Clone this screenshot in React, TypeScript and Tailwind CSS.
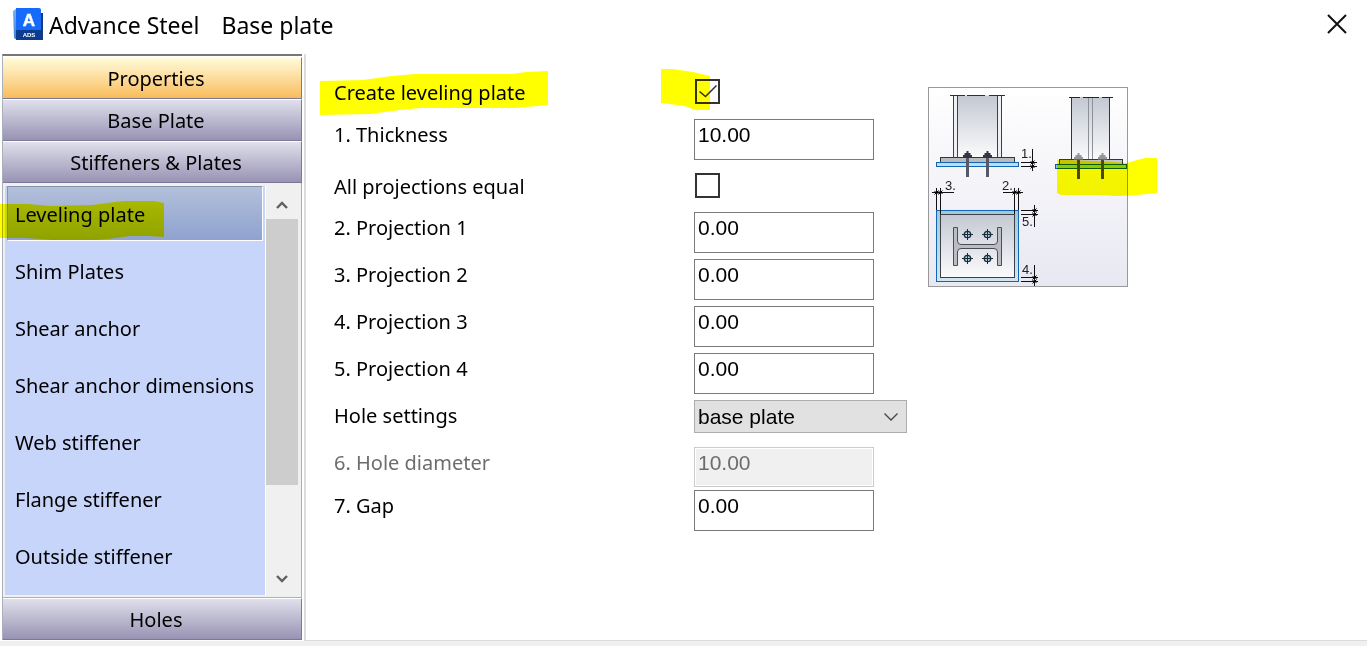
import React, { useState } from "react";

type Field = {
  id: string;
  label: string;
  kind: "check" | "text" | "select";
  value?: string;
  rowClass: string;
  disabled?: boolean;
  marked?: boolean;
};

const fields: Field[] = [
  { id: "create", label: "Create leveling plate", kind: "check", value: "on", rowClass: "h-10", marked: true },
  { id: "thickness", label: "1. Thickness", kind: "text", value: "10.00", rowClass: "h-[54px]" },
  { id: "equal", label: "All projections equal", kind: "check", rowClass: "h-[39px]" },
  { id: "proj1", label: "2. Projection 1", kind: "text", value: "0.00", rowClass: "h-[47px]" },
  { id: "proj2", label: "3. Projection 2", kind: "text", value: "0.00", rowClass: "h-[47px]" },
  { id: "proj3", label: "4. Projection 3", kind: "text", value: "0.00", rowClass: "h-[47px]" },
  { id: "proj4", label: "5. Projection 4", kind: "text", value: "0.00", rowClass: "h-[47px]" },
  { id: "holes", label: "Hole settings", kind: "select", value: "base plate", rowClass: "h-[47px]" },
  { id: "diameter", label: "6. Hole diameter", kind: "text", value: "10.00", rowClass: "h-[43px]", disabled: true },
  { id: "gap", label: "7. Gap", kind: "text", value: "0.00", rowClass: "h-[47px]" },
];

const pages = [
  "Leveling plate",
  "Shim Plates",
  "Shear anchor",
  "Shear anchor dimensions",
  "Web stiffener",
  "Flange stiffener",
  "Outside stiffener",
];

const Logo = () => (
  <svg width="30" height="32" viewBox="0 0 30 32" aria-hidden="true">
    <defs>
      <linearGradient id="logoSide" x1="0" y1="0" x2="0" y2="1">
        <stop offset="0" stopColor="#79b0f5" />
        <stop offset="1" stopColor="#3f7fd8" />
      </linearGradient>
    </defs>
    <path d="M0 3 L4 0 V32 L1 30 Z" fill="url(#logoSide)" />
    <path d="M27 5 H30 V32 H27 Z" fill="#123a86" />
    <path d="M3 0 H26 Q28 0 28 2 V22 H3 Z" fill="#176bfb" />
    <path d="M3 22 H29 V32 H3 Z" fill="#0d3c8f" />
    <text x="16" y="17.5" textAnchor="middle" fontSize="17" fontWeight="700" fill="#fff" stroke="#fff" strokeWidth="0.5" fontFamily="Liberation Sans, sans-serif">A</text>
    <text x="16" y="29" textAnchor="middle" fontSize="6" fontWeight="700" fill="#fff" fontFamily="Liberation Sans, sans-serif">ADS</text>
  </svg>
);

const SectionButton = ({ label, active }: { label: string; active?: boolean }) => (
  <button
    type="button"
    className={
      "flex h-[42px] w-full shrink-0 items-center justify-center border-b border-r border-t border-b-[#7d7896] border-r-[#7d7896] border-t-white bg-linear-to-b pl-2 pt-[2px] text-xl " +
      (active ? "from-[#fffbd9] to-[#f8bc59]" : "from-[#e0e0ec] to-[#9893b3]")
    }
  >
    {label}
  </button>
);

// Anchor bolt seen from the side, origin at the top of the rod
const Bolt = ({ x, y, head, rod }: { x: number; y: number; head: string; rod: string }) => (
  <g transform={`translate(${x} ${y})`}>
    <rect x="-1.5" y="7" width="3" height="19" fill={rod} />
    <path d="M-1 0 H1 V2 H3 V4 H4.5 V6.5 H-4.5 V4 H-3 V2 H-1 Z" fill={head} />
  </g>
);

const HoleMark = ({ x, y }: { x: number; y: number }) => (
  <g transform={`translate(${x} ${y})`} fill="none" stroke="#1d2a38">
    <circle r="3.2" fill="#a9cfe0" strokeWidth="1.3" />
    <path d="M-5.5 0 H5.5 M0 -5.5 V5.5" strokeWidth="1" />
  </g>
);

const Slash = ({ x, y }: { x: number; y: number }) => (
  <path d={`M${x - 2} ${y + 2} L${x + 2} ${y - 2} M${x - 2} ${y - 1} L${x + 2} ${y + 1}`} stroke="#000" />
);

const Diagram = () => (
  <svg width="200" height="200" viewBox="0 0 200 200" role="img" aria-label="Leveling plate diagram" className="block">
    <defs>
      <linearGradient id="sheet" x1="0" y1="0" x2="0" y2="1">
        <stop offset="0" stopColor="#ffffff" />
        <stop offset="1" stopColor="#e8e8f2" />
      </linearGradient>
      <linearGradient id="steel" x1="0" y1="0" x2="0" y2="1">
        <stop offset="0" stopColor="#c3c8d2" />
        <stop offset="1" stopColor="#fbfbfc" />
      </linearGradient>
      <linearGradient id="level" x1="0" y1="0" x2="0" y2="1">
        <stop offset="0" stopColor="#9bcbdc" />
        <stop offset="1" stopColor="#d3e6f0" />
      </linearGradient>
    </defs>
    <rect x="0.5" y="0.5" width="199" height="199" fill="url(#sheet)" stroke="#999" />

    {/* front view */}
    <rect x="25.5" y="8.5" width="48" height="62" fill="url(#steel)" />
    <path d="M26 9 H29 V70 H26 Z M70 9 H73 V70 H70 Z" fill="#eef0f3" />
    <path d="M25.5 8 V70 M29.5 8 V70 M69.5 8 V70 M73.5 8 V70" stroke="#3c4049" />
    <path d="M22 8.5 H37 M39 8.5 H57 M61 8.5 H77" stroke="#2c3038" />
    <rect x="12.5" y="70.5" width="74" height="5" fill="#b9bbc1" stroke="#33363d" />
    <rect x="8.5" y="75.5" width="82" height="4" fill="#b9e0f2" stroke="#1464b4" />
    <Bolt x={39.5} y={64} head="#33363f" rod="#555a66" />
    <Bolt x={59.5} y={64} head="#33363f" rod="#555a66" />

    {/* side view */}
    <rect x="143.5" y="10.5" width="38" height="62" fill="url(#steel)" stroke="#33363f" />
    <path d="M160.5 11 V72 M164.5 11 V72" stroke="#8d9096" />
    <path d="M141 10.5 H185" stroke="#22252c" />
    <path d="M152 10.5 H155 M171 10.5 H174" stroke="#c3c8d2" />
    <rect x="131.5" y="72.5" width="63" height="5" fill="#c4c4cc" stroke="#33363d" />
    <rect x="127.5" y="77.5" width="71" height="4" fill="#8ccbe0" stroke="#0f5c96" />
    <Bolt x={150.5} y={66} head="#94969b" rod="#4a4a48" />
    <Bolt x={174.5} y={66} head="#94969b" rod="#4a4a48" />

    {/* top view */}
    <rect x="8.5" y="123.5" width="82" height="71" fill="url(#level)" stroke="#1464b4" />
    <rect x="12.5" y="127.5" width="74" height="63" fill="url(#steel)" stroke="#3c4049" />
    <path
      d="M25.5 140.5 H29.5 V154 Q29.5 157.5 33 157.5 H66 Q69.5 157.5 69.5 154 V140.5 H73.5 V178.5 H69.5 V165 Q69.5 161.5 66 161.5 H33 Q29.5 161.5 29.5 165 V178.5 H25.5 Z"
      fill="#bcbdc3"
      stroke="#4a4d55"
    />
    <HoleMark x={39.5} y={147.5} />
    <HoleMark x={59.5} y={147.5} />
    <HoleMark x={39.5} y={171.5} />
    <HoleMark x={59.5} y={171.5} />

    {/* dimensions */}
    <path
      d="M93 75.5 H109 M93 79.5 H109 M104.5 62 V84 M4 105.5 H26 M8.5 101 V123 M12.5 101 V127 M75 105.5 H95 M86.5 101 V127 M90.5 101 V123 M93 123.5 H110 M93 127.5 H110 M106.5 118 V140 M93 190.5 H110 M93 194.5 H110 M106.5 178 V199"
      stroke="#111"
      fill="none"
    />
    <Slash x={104.5} y={75.5} />
    <Slash x={104.5} y={79.5} />
    <Slash x={8.5} y={105.5} />
    <Slash x={12.5} y={105.5} />
    <Slash x={86.5} y={105.5} />
    <Slash x={90.5} y={105.5} />
    <Slash x={106.5} y={123.5} />
    <Slash x={106.5} y={127.5} />
    <Slash x={106.5} y={190.5} />
    <Slash x={106.5} y={194.5} />
    <g fontSize="13" fill="#222" fontFamily="Liberation Sans, sans-serif">
      <text x="93" y="71">1.</text>
      <text x="17" y="103">3.</text>
      <text x="74" y="103">2.</text>
      <text x="94" y="139">5.</text>
      <text x="94" y="187">4.</text>
    </g>
  </svg>
);

const Marker = ({ points, width, height, className }: { points: string; width: number; height: number; className: string }) => (
  <svg
    width={width}
    height={height}
    viewBox={`0 0 ${width} ${height}`}
    aria-hidden="true"
    className={"pointer-events-none absolute z-10 mix-blend-multiply " + className}
  >
    <polygon points={points} fill="#ffff00" />
  </svg>
);

const ScrollArrow = ({ d }: { d: string }) => (
  <svg width="12" height="10" viewBox="0 0 12 10">
    <path d={d} fill="none" stroke="#606060" strokeWidth="2.4" />
  </svg>
);

const Control = ({ field }: { field: Field }) => {
  const [value, setValue] = useState(field.value ?? "");

  if (field.kind === "check") {
    return (
      <span className="relative ml-px block size-[25px]">
        <input
          id={field.id}
          type="checkbox"
          checked={value === "on"}
          onChange={(e) => setValue(e.target.checked ? "on" : "")}
          className="block size-[25px] appearance-none border-2 border-[#333] bg-white"
        />
        {value === "on" && (
          <svg width="25" height="25" viewBox="0 0 25 25" aria-hidden="true" className="pointer-events-none absolute left-0 top-0">
            <path d="M4.5 12.5 L10.5 17.5 L21.5 6.5" fill="none" stroke="#333" strokeWidth="1.5" />
          </svg>
        )}
        {field.marked && (
          <Marker className="-left-[34px] -top-[10px]" width={49} height={41} points="0,0 12,0 32,3 49,7 49,41 34,41 24,37 0,34" />
        )}
      </span>
    );
  }

  if (field.kind === "select") {
    return (
      <span className="relative block w-[213px]">
        <select
          id={field.id}
          value={value}
          onChange={(e) => setValue(e.target.value)}
          className="block h-[33px] w-full appearance-none border border-[#adadad] bg-[#e1e1e1] pl-[3px] font-['Liberation_Sans',sans-serif] text-[21px] leading-[30px]"
        >
          <option>base plate</option>
        </select>
        <svg width="14" height="8" viewBox="0 0 14 8" aria-hidden="true" className="pointer-events-none absolute right-[9px] top-[13px]">
          <path d="M0.5 0.5 L7 7 L13.5 0.5" fill="none" stroke="#444" strokeWidth="1.3" />
        </svg>
      </span>
    );
  }

  return (
    <input
      id={field.id}
      type="text"
      value={value}
      disabled={field.disabled}
      onChange={(e) => setValue(e.target.value)}
      className={
        "block w-[180px] border pl-[3px] font-['Liberation_Sans',sans-serif] text-[21px] leading-[30px] " +
        (field.disabled
          ? "h-10 border-[#ccc] bg-[#f0f0f0] pb-2 text-[#6d6d6d] inset-ring inset-ring-white"
          : "h-[41px] border-[#7a7a7a] bg-white pb-[10px]")
      }
    />
  );
};

const App: React.FC = () => {
  const [selected, setSelected] = useState("Leveling plate");

  return (
    <div className="flex min-h-screen w-full flex-col bg-white font-['Noto_Sans',sans-serif] text-black">
      <header className="flex h-[54px] items-start pl-[13px] pr-[19px] pt-2">
        <Logo />
        <h1 className="flex gap-[22px] pl-[6px] text-[23px] leading-[34px]">
          <span>Advance Steel</span>
          <span>Base plate</span>
        </h1>
        <button type="button" aria-label="Close" className="ml-auto mt-[5px]">
          <svg width="22" height="22" viewBox="0 0 22 22" aria-hidden="true">
            <path d="M2 2 L20 20 M20 2 L2 20" stroke="#111" strokeWidth="2" />
          </svg>
        </button>
      </header>

      <div className="flex flex-1">
        <nav className="mb-px ml-[2px] flex w-[300px] shrink-0 flex-col border-l border-t-2 border-l-[#a9b0bb] border-t-[#777] pt-px">
          <SectionButton label="Properties" active />
          <SectionButton label="Base Plate" />
          <SectionButton label="Stiffeners & Plates" />
          <div className="flex flex-1 border-b border-r border-[#a9b0bb] bg-[#f0f0f0] pb-[2px] pl-[2px] pt-[3px]">
            <ul className="flex-1 border-r border-white bg-[#c8d5fb] pb-2 pl-[2px] pr-[2px]">
              {pages.map((page) => (
                <li key={page} className="relative h-[57px]">
                  <button
                    type="button"
                    onClick={() => setSelected(page)}
                    className={
                      "flex h-[55px] w-full items-center border pl-[7px] pt-[2px] text-left text-xl " +
                      (page === selected
                        ? "border-b-white border-l-[#8792b0] border-r-white border-t-[#8792b0] bg-linear-to-b from-[#b3c0da] to-[#8fa2d0]"
                        : "border-transparent")
                    }
                  >
                    {page}
                  </button>
                  {page === "Leveling plate" && (
                    <Marker
                      className="-left-[7px] top-[15px]"
                      width={164}
                      height={39}
                      points="0,3 28,3 50,5 92,4 115,1 124,0 154,0 164,2 164,36 148,35 130,35 108,38 96,39 52,39 26,37 0,37"
                    />
                  )}
                </li>
              ))}
            </ul>
            <div className="flex w-[35px] flex-col items-center pr-[3px]" aria-hidden="true">
              <div className="flex h-[33px] items-center pt-1">
                <ScrollArrow d="M1 8 L6 3 L11 8" />
              </div>
              <div className="h-[266px] w-8 bg-[#cdcdcd]" />
              <div className="mt-auto flex h-[33px] items-center">
                <ScrollArrow d="M1 2 L6 7 L11 2" />
              </div>
            </div>
          </div>
          <SectionButton label="Holes" />
        </nav>

        <main className="ml-[2px] flex flex-1 border-b border-l-2 border-[#dcdcdc] pl-7 pt-[25px]">
          <form>
            {fields.map((field) => (
              <div key={field.id} className={"flex items-start " + field.rowClass}>
                <div className="relative w-[360px]">
                  <label
                    htmlFor={field.id}
                    className={
                      "block text-xl " +
                      (field.kind === "check" ? "leading-7 " : "leading-8 ") +
                      (field.disabled ? "text-[#6d6d6d]" : "")
                    }
                  >
                    {field.label}
                  </label>
                  {field.marked && (
                    <Marker
                      className="-left-[14px] -top-[8px]"
                      width={228}
                      height={44}
                      points="0,10 43,9 72,5 95,3 192,3 206,1 228,0 228,34 195,37 100,37 80,39 50,43 0,44"
                    />
                  )}
                </div>
                <Control field={field} />
              </div>
            ))}
          </form>
          <div className="relative ml-[21px] mt-2 self-start">
            <Diagram />
            <Marker
              className="left-[129px] top-[71px]"
              width={100}
              height={38}
              points="0,2 10,2 40,3 70,5 80,2 88,0 100,0 100,35 80,37 60,38 43,37 4,37 0,35"
            />
          </div>
        </main>
      </div>
      <footer className="h-[5px] bg-[#f0f0f0]" />
    </div>
  );
};

export default App;
